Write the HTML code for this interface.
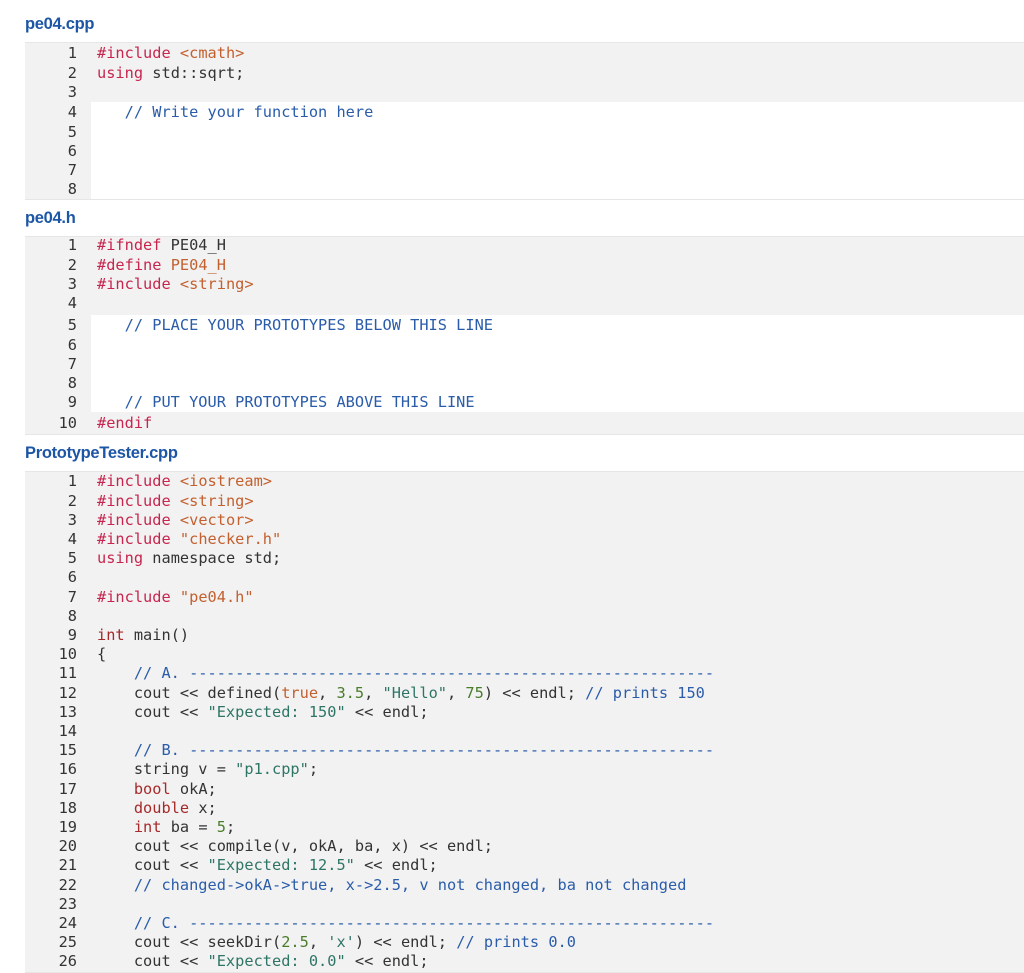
<!DOCTYPE html>
<html><head><meta charset="utf-8"><style>
body{margin:0;width:1024px;height:958px;background:#fff;position:relative;overflow:hidden;font-family:"DejaVu Sans Mono","Liberation Mono",monospace;font-size:15.3px;color:#333}
.h{position:absolute;left:25px;font-family:"Liberation Sans",sans-serif;font-weight:bold;font-size:16.5px;color:#1d56a5;letter-spacing:-0.3px}
.g{position:absolute;left:25px;right:0;background:#f2f2f2;border-top:1px solid #e6e6e6;border-bottom:1px solid #e6e6e6}
.w{position:absolute;left:91px;right:0;background:#fff}
.l{position:absolute;left:0;height:19.2px;line-height:19.2px;white-space:pre}
.n{position:absolute;left:25px;width:52px;text-align:right}
.c{position:absolute;left:97px}
.p{color:#c7254e}.i{color:#c3602f}.k{color:#a52a2a}.m{color:#2a5caa}.s{color:#2e7566}.d{color:#4a7c2a}.t{color:#c3602f}
</style></head><body>
<div class="h" style="top:15px">pe04.cpp</div>
<div class="g" style="top:42px;height:156px"></div>
<div class="w" style="top:102px;height:97px"></div>
<div class="l" style="top:44.4px"><span class="n">1</span><span class="c"><span class="p">#include</span> <span class="i">&lt;cmath&gt;</span></span></div>
<div class="l" style="top:63.6px"><span class="n">2</span><span class="c"><span class="p">using</span> std::sqrt;</span></div>
<div class="l" style="top:82.8px"><span class="n">3</span></div>
<div class="l" style="top:103.4px"><span class="n">4</span><span class="c"><span class="m">   // Write your function here</span></span></div>
<div class="l" style="top:122.6px"><span class="n">5</span></div>
<div class="l" style="top:141.8px"><span class="n">6</span></div>
<div class="l" style="top:161px"><span class="n">7</span></div>
<div class="l" style="top:180.2px"><span class="n">8</span></div>

<div class="h" style="top:209px">pe04.h</div>
<div class="g" style="top:236px;height:197px"></div>
<div class="w" style="top:315px;height:97px"></div>
<div class="l" style="top:236.4px"><span class="n">1</span><span class="c"><span class="p">#ifndef</span> PE04_H</span></div>
<div class="l" style="top:255.6px"><span class="n">2</span><span class="c"><span class="p">#define</span> <span class="i">PE04_H</span></span></div>
<div class="l" style="top:274.8px"><span class="n">3</span><span class="c"><span class="p">#include</span> <span class="i">&lt;string&gt;</span></span></div>
<div class="l" style="top:294px"><span class="n">4</span></div>
<div class="l" style="top:316.4px"><span class="n">5</span><span class="c"><span class="m">   // PLACE YOUR PROTOTYPES BELOW THIS LINE</span></span></div>
<div class="l" style="top:335.6px"><span class="n">6</span></div>
<div class="l" style="top:354.8px"><span class="n">7</span></div>
<div class="l" style="top:374px"><span class="n">8</span></div>
<div class="l" style="top:393.2px"><span class="n">9</span><span class="c"><span class="m">   // PUT YOUR PROTOTYPES ABOVE THIS LINE</span></span></div>
<div class="l" style="top:414.4px"><span class="n">10</span><span class="c"><span class="p">#endif</span></span></div>

<div class="h" style="top:444px">PrototypeTester.cpp</div>
<div class="g" style="top:471px;height:500px"></div>
<div class="l" style="top:472.4px"><span class="n">1</span><span class="c"><span class="p">#include</span> <span class="i">&lt;iostream&gt;</span></span></div>
<div class="l" style="top:491.6px"><span class="n">2</span><span class="c"><span class="p">#include</span> <span class="i">&lt;string&gt;</span></span></div>
<div class="l" style="top:510.8px"><span class="n">3</span><span class="c"><span class="p">#include</span> <span class="i">&lt;vector&gt;</span></span></div>
<div class="l" style="top:530px"><span class="n">4</span><span class="c"><span class="p">#include</span> <span class="i">"checker.h"</span></span></div>
<div class="l" style="top:549.2px"><span class="n">5</span><span class="c"><span class="p">using</span> namespace std;</span></div>
<div class="l" style="top:568.4px"><span class="n">6</span></div>
<div class="l" style="top:587.6px"><span class="n">7</span><span class="c"><span class="p">#include</span> <span class="i">"pe04.h"</span></span></div>
<div class="l" style="top:606.8px"><span class="n">8</span></div>
<div class="l" style="top:626px"><span class="n">9</span><span class="c"><span class="k">int</span> main()</span></div>
<div class="l" style="top:645.2px"><span class="n">10</span><span class="c">{</span></div>
<div class="l" style="top:664.4px"><span class="n">11</span><span class="c">    <span class="m">// A. ---------------------------------------------------------</span></span></div>
<div class="l" style="top:683.6px"><span class="n">12</span><span class="c">    cout &lt;&lt; defined(<span class="t">true</span>, <span class="d">3.5</span>, <span class="s">"Hello"</span>, <span class="d">75</span>) &lt;&lt; endl; <span class="m">// prints 150</span></span></div>
<div class="l" style="top:702.8px"><span class="n">13</span><span class="c">    cout &lt;&lt; <span class="s">"Expected: 150"</span> &lt;&lt; endl;</span></div>
<div class="l" style="top:722px"><span class="n">14</span></div>
<div class="l" style="top:741.2px"><span class="n">15</span><span class="c">    <span class="m">// B. ---------------------------------------------------------</span></span></div>
<div class="l" style="top:760.4px"><span class="n">16</span><span class="c">    string v = <span class="s">"p1.cpp"</span>;</span></div>
<div class="l" style="top:779.6px"><span class="n">17</span><span class="c">    <span class="k">bool</span> okA;</span></div>
<div class="l" style="top:798.8px"><span class="n">18</span><span class="c">    <span class="k">double</span> x;</span></div>
<div class="l" style="top:818px"><span class="n">19</span><span class="c">    <span class="k">int</span> ba = <span class="d">5</span>;</span></div>
<div class="l" style="top:837.2px"><span class="n">20</span><span class="c">    cout &lt;&lt; compile(v, okA, ba, x) &lt;&lt; endl;</span></div>
<div class="l" style="top:856.4px"><span class="n">21</span><span class="c">    cout &lt;&lt; <span class="s">"Expected: 12.5"</span> &lt;&lt; endl;</span></div>
<div class="l" style="top:875.6px"><span class="n">22</span><span class="c">    <span class="m">// changed-&gt;okA-&gt;true, x-&gt;2.5, v not changed, ba not changed</span></span></div>
<div class="l" style="top:894.8px"><span class="n">23</span></div>
<div class="l" style="top:914px"><span class="n">24</span><span class="c">    <span class="m">// C. ---------------------------------------------------------</span></span></div>
<div class="l" style="top:933.2px"><span class="n">25</span><span class="c">    cout &lt;&lt; seekDir(<span class="d">2.5</span>, <span class="s">'x'</span>) &lt;&lt; endl; <span class="m">// prints 0.0</span></span></div>
<div class="l" style="top:952.4px"><span class="n">26</span><span class="c">    cout &lt;&lt; <span class="s">"Expected: 0.0"</span> &lt;&lt; endl;</span></div>
</body></html>
